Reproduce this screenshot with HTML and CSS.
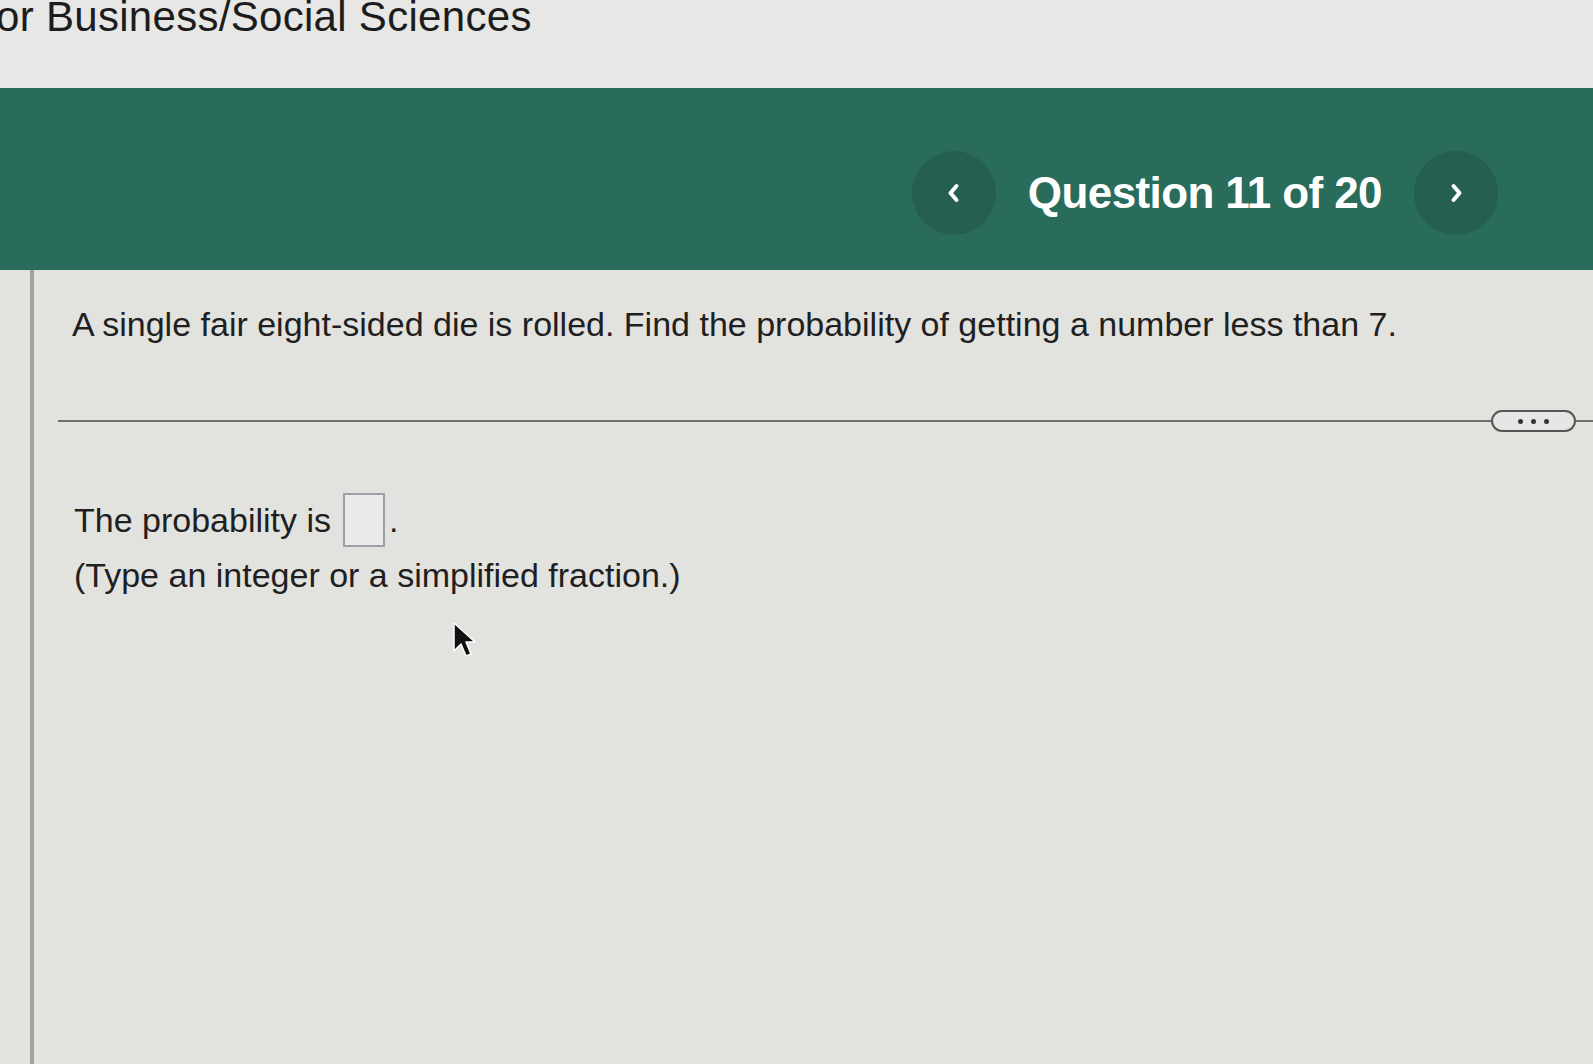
FILE: index.html
```html
<!DOCTYPE html>
<html lang="en">
<head>
<meta charset="utf-8">
<title>Question 11 of 20</title>
<link rel="stylesheet" href="styles.css">
</head>
<body>
<div class="top">
  <div class="course">or Business/Social Sciences</div>
</div>
<header class="band">
  <nav class="qnav">
    <button class="circle" aria-label="Previous question">
      <svg width="20" height="26" viewBox="0 0 20 26"><path d="M12.5 6 L6.5 13 L12.5 20" fill="none" stroke="#ffffff" stroke-width="4" stroke-linecap="round" stroke-linejoin="round"/></svg>
    </button>
    <h1 class="qtitle">Question 11 of 20</h1>
    <button class="circle" aria-label="Next question">
      <svg width="20" height="26" viewBox="0 0 20 26"><path d="M7.5 6 L13.5 13 L7.5 20" fill="none" stroke="#ffffff" stroke-width="4" stroke-linecap="round" stroke-linejoin="round"/></svg>
    </button>
  </nav>
</header>
<main class="panel">
  <p class="question">A single fair eight-sided die is rolled. Find the probability of getting a number less than 7.</p>
  <div class="divider">
    <span class="rule"></span>
    <button class="more" aria-label="More"><i></i><i></i><i></i></button>
    <span class="rule tail"></span>
  </div>
  <div class="answer">
    <p class="line1">The probability is <span class="box"></span>.</p>
    <p class="line2">(Type an integer or a simplified fraction.)</p>
  </div>
  <svg class="cursor" width="28" height="40" viewBox="0 0 28 40"><path d="M2 2 L2 30 L9 23 L14 35 L19 33 L14 21 L23 21 Z" fill="#111" stroke="#fff" stroke-width="1.5" stroke-linejoin="round"/></svg>
</main>
</body>
</html>
```

FILE: styles.css
```css
html, body {
  margin: 0;
  padding: 0;
}
body {
  background: #e2e2df;
  font-family: "Liberation Sans", Arial, Helvetica, sans-serif;
  color: #1e1e1e;
  width: 1593px;
  height: 1064px;
  overflow: hidden;
}
.top {
  height: 88px;
  background: #e7e7e5;
  overflow: hidden;
}
.course {
  font-size: 42px;
  line-height: 48px;
  margin-top: -7px;
  margin-left: -4px;
  color: #1c1c1c;
  letter-spacing: 0.3px;
  white-space: nowrap;
}
.band {
  height: 182px;
  background: #2a6c5b;
  display: flex;
  justify-content: flex-end;
  align-items: flex-start;
  box-sizing: border-box;
  padding-top: 63px;
  padding-right: 95px;
}
.qnav {
  display: flex;
  align-items: center;
  gap: 32px;
}
.circle {
  width: 84px;
  height: 84px;
  border-radius: 50%;
  border: none;
  background: #245f50;
  display: flex;
  align-items: center;
  justify-content: center;
  padding: 0;
}
.qtitle {
  margin: 0;
  font-size: 44px;
  font-weight: bold;
  color: #ffffff;
  letter-spacing: -0.6px;
}
.panel {
  position: relative;
  margin-left: 30px;
  border-left: 4px solid #a2a2a0;
  height: 800px;
  box-sizing: border-box;
  padding-top: 33px;
}
.question {
  margin: 0 0 0 38px;
  font-size: 34px;
  line-height: 42px;
  color: #1f1f1f;
}
.divider {
  display: flex;
  align-items: center;
  margin-top: 65px;
  margin-left: 24px;
}
.rule {
  flex: 1;
  height: 2px;
  background: #6e6e6c;
}
.rule.tail {
  flex: 0 0 17px;
}
.more {
  width: 85px;
  height: 22px;
  border: 2px solid #555;
  border-radius: 12px;
  background: #e6e6e4;
  display: flex;
  align-items: center;
  justify-content: center;
  gap: 8px;
  padding: 0;
}
.more i {
  width: 5px;
  height: 5px;
  border-radius: 50%;
  background: #333;
  display: block;
}
.answer {
  margin-left: 40px;
  margin-top: 61px;
  font-size: 34px;
  color: #1f1f1f;
}
.answer p {
  margin: 0;
}
.answer .line1 {
  display: flex;
  align-items: center;
  line-height: 54px;
}
.box {
  display: inline-block;
  width: 38px;
  height: 50px;
  border: 2px solid #9aa0a8;
  background: #e9e9e7;
  margin-left: 12px;
  margin-right: 4px;
}
.answer .line2 {
  line-height: 44px;
  margin-top: 6px;
}
.cursor {
  position: absolute;
  left: 418px;
  top: 351px;
}
```
